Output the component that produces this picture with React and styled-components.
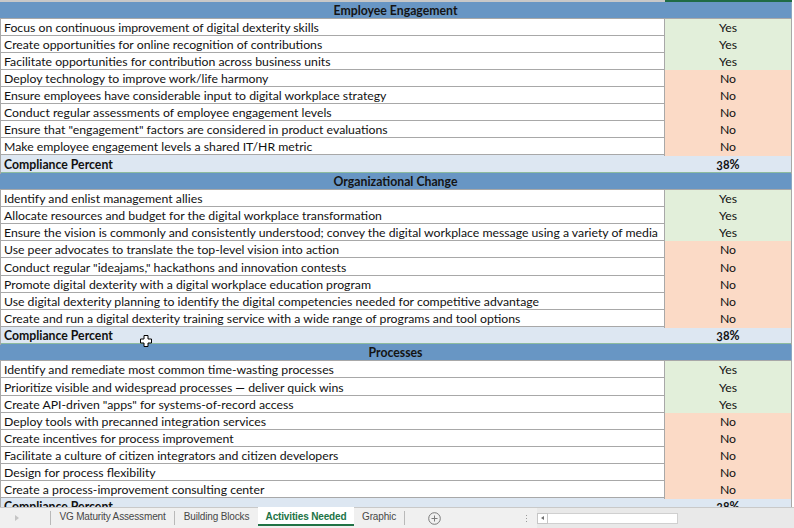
import React from "react";
import styled, { createGlobalStyle } from "styled-components";

const GlobalStyle = createGlobalStyle`
  html, body { margin: 0; padding: 0; background: #ffffff; overflow: hidden; }
  body { font-family: Lato, "Liberation Sans", sans-serif; }
`;

const sections = [
  {
    title: "Employee Engagement",
    pct: "38%",
    items: [
      ["Focus on continuous improvement of digital dexterity skills", "Yes"],
      ["Create opportunities for online recognition of contributions", "Yes"],
      ["Facilitate opportunities for contribution across business units", "Yes"],
      ["Deploy technology to improve work/life harmony", "No"],
      ["Ensure employees have considerable input to digital workplace strategy", "No"],
      ["Conduct regular assessments of employee engagement levels", "No"],
      ["Ensure that \"engagement\" factors are considered in product evaluations", "No"],
      ["Make employee engagement levels a shared IT/HR metric", "No"],
    ],
  },
  {
    title: "Organizational Change",
    pct: "38%",
    items: [
      ["Identify and enlist management allies", "Yes"],
      ["Allocate resources and budget for the digital workplace transformation", "Yes"],
      ["Ensure the vision is commonly and consistently understood; convey the digital workplace message using a variety of media", "Yes"],
      ["Use peer advocates to translate the top-level vision into action", "No"],
      ["Conduct regular \"ideajams,\" hackathons and innovation contests", "No"],
      ["Promote digital dexterity with a digital workplace education program", "No"],
      ["Use digital dexterity planning to identify the digital competencies needed for competitive advantage", "No"],
      ["Create and run a digital dexterity training service with a wide range of programs and tool options", "No"],
    ],
  },
  {
    title: "Processes",
    pct: "38%",
    items: [
      ["Identify and remediate most common time-wasting processes", "Yes"],
      ["Prioritize visible and widespread processes \u2014 deliver quick wins", "Yes"],
      ["Create API-driven \"apps\" for systems-of-record access", "Yes"],
      ["Deploy tools with precanned integration services", "No"],
      ["Create incentives for process improvement", "No"],
      ["Facilitate a culture of citizen integrators and citizen developers", "No"],
      ["Design for process flexibility", "No"],
      ["Create a process-improvement consulting center", "No"],
    ],
  },
];

/* Excel zoom gives rows of ~17.1px: a few rows are one pixel taller */
const TALL_ROWS = new Set([9, 15, 22]);

const tabs = [
  { name: "VG Maturity Assessment", w: 123 },
  { name: "Building Blocks", w: 83 },
  { name: "Activities Needed", w: 96, active: true },
  { name: "Graphic", w: 50 },
];

const Page = styled.div`
  width: 794px;
  height: 528px;
  display: flex;
  flex-direction: column;
  overflow: hidden;
  background: #ffffff;
`;

const Sheet = styled.div`
  position: relative;
  height: 507px;
  overflow: hidden;
  flex: none;
`;

const TopStrip = styled.div`
  display: grid;
  grid-template-columns: 665px 127px;
  height: 2px;
`;

const StripCell = styled.div`
  background: ${(p) => (p.$selected ? "#1f6b45" : "#c8c8c8")};
`;

const Row = styled.div`
  display: grid;
  grid-template-columns: 665px 127px;
  width: 792px;
  height: ${(p) => (p.$tall ? 18 : 17)}px;
  box-sizing: border-box;
  border-bottom: 1px solid ${(p) => (p.$line ? p.$line : "#a8a8a8")};
  background: ${(p) => p.$bg || "#ffffff"};
  font-size: 12.25px;
  line-height: ${(p) => (p.$tall ? 19 : 18)}px;
  color: #111111;
  font-variant-numeric: oldstyle-nums;
`;

const HeaderRow = styled.div`
  width: 792px;
  height: ${(p) => (p.$tall ? 18 : 17)}px;
  box-sizing: border-box;
  background: #6896c4;
  border-bottom: 1px solid #a8a8a8;
  border-right: 1px solid #8aa6c2;
  font-size: 12.25px;
  line-height: ${(p) => (p.$tall ? 19 : 18)}px;
  font-weight: 700;
  text-align: center;
  color: #141414;
`;

const LabelCell = styled.div`
  box-sizing: border-box;
  border-left: 1px solid #a8a8a8;
  border-right: 1px solid ${(p) => (p.$noDivider ? "transparent" : "#a8a8a8")};
  padding-left: 3px;
  white-space: nowrap;
  overflow-x: clip;
  font-weight: ${(p) => (p.$bold ? 700 : 400)};
`;

const valueBg = { Yes: "#e2efda", No: "#fbdac6" };

const ValueCell = styled.div`
  box-sizing: border-box;
  border-right: 1px solid #a8a8a8;
  text-align: center;
  background: ${(p) => valueBg[p.$v] || "transparent"};
  font-weight: ${(p) => (p.$bold ? 700 : 400)};
`;

const Cursor = styled.svg`
  position: absolute;
  left: 140px;
  top: 335px;
  pointer-events: none;
`;

const TabBar = styled.div`
  flex: 1;
  display: flex;
  align-items: stretch;
  background: #f0f0f0;
  border-top: 1px solid #c9c9c9;
  font-family: "Liberation Sans", Arial, sans-serif;
  font-size: 10px;
  color: #474747;
`;

const NavArea = styled.div`
  width: 50px;
  display: flex;
  align-items: center;
  padding-left: 15px;
  box-sizing: border-box;
`;

const NavArrow = styled.span`
  width: 0;
  height: 0;
  border-top: 3px solid transparent;
  border-bottom: 3px solid transparent;
  border-left: 4px solid #c4c4c4;
`;

const Sep = styled.div`
  width: 1px;
  align-self: center;
  height: 14px;
  background: #b9b9b9;
`;

const Tab = styled.div`
  width: ${(p) => p.$w}px;
  display: flex;
  align-items: center;
  justify-content: center;
  white-space: nowrap;
  box-sizing: border-box;
  margin-bottom: 2px;
  background: ${(p) => (p.$active ? "#ffffff" : "transparent")};
  color: ${(p) => (p.$active ? "#217346" : "#474747")};
  font-weight: ${(p) => (p.$active ? 700 : 400)};
  border-bottom: 2px solid ${(p) => (p.$active ? "#217346" : "transparent")};
  padding-top: 1px;
  margin-top: -1px;
  letter-spacing: -0.15px;
`;

const AddArea = styled.div`
  width: 58px;
  display: flex;
  align-items: center;
  justify-content: center;
`;

const Spacer = styled.div`
  width: 74px;
  display: flex;
  align-items: center;
  justify-content: flex-end;
  padding-right: 10px;
  box-sizing: border-box;
`;

const Dots = styled.div`
  display: flex;
  flex-direction: column;
  gap: 2px;
  span {
    width: 1px;
    height: 1px;
    background: #9a9a9a;
  }
`;

const Track = styled.div`
  flex: 1;
  display: flex;
  align-items: center;
  background: #e9e9e9;
`;

const ScrollButton = styled.div`
  width: 11px;
  height: 11px;
  box-sizing: border-box;
  border: 1px solid #c6c6c6;
  background: #ffffff;
  display: flex;
  align-items: center;
  justify-content: center;
`;

const LeftTri = styled.span`
  width: 0;
  height: 0;
  border-top: 2px solid transparent;
  border-bottom: 2px solid transparent;
  border-right: 3px solid #707070;
`;

const Thumb = styled.div`
  width: 130px;
  height: 11px;
  box-sizing: border-box;
  border: 1px solid #d0d0d0;
  border-left: none;
  background: #ffffff;
`;

function Section({ s, start }) {
  const last = start + s.items.length + 1;
  return (
    <>
      <HeaderRow $tall={TALL_ROWS.has(start)}>{s.title}</HeaderRow>
      {s.items.map(([label, v], i) => (
        <Row key={label} $tall={TALL_ROWS.has(start + 1 + i)}>
          <LabelCell>{label}</LabelCell>
          <ValueCell $v={v}>{v}</ValueCell>
        </Row>
      ))}
      <Row $bg="#dde7f2" $line="#8dbb9e" $tall={TALL_ROWS.has(last)}>
        <LabelCell $bold $noDivider>Compliance Percent</LabelCell>
        <ValueCell $bold>{s.pct}</ValueCell>
      </Row>
    </>
  );
}

export default function App() {
  return (
    <Page>
      <GlobalStyle />
      <Sheet>
        <TopStrip>
          <StripCell />
          <StripCell $selected />
        </TopStrip>
        {sections.map((s, k) => (
          <Section key={s.title} s={s} start={k * 10} />
        ))}
        <Cursor width="12" height="12" viewBox="0 0 12 12">
          <path
            d="M4 0.5 H8 V4 H11.5 V8 H8 V11.5 H4 V8 H0.5 V4 H4 Z"
            fill="#ffffff"
            stroke="#000000"
            strokeWidth="1"
          />
        </Cursor>
      </Sheet>
      <TabBar>
        <NavArea>
          <NavArrow />
        </NavArea>
        <Sep />
        {tabs.map((t, i) => (
          <React.Fragment key={t.name}>
            <Tab $w={t.w} $active={t.active}>
              {t.name}
            </Tab>
            {i === 0 && <Sep />}
          </React.Fragment>
        ))}
        <Sep />
        <AddArea>
          <svg width="13" height="13" viewBox="0 0 13 13">
            <circle cx="6.5" cy="6.5" r="5.8" fill="none" stroke="#7a7a7a" strokeWidth="1" />
            <path d="M6.5 3.5 V9.5 M3.5 6.5 H9.5" stroke="#7a7a7a" strokeWidth="1" />
          </svg>
        </AddArea>
        <Spacer>
          <Dots>
            <span />
            <span />
            <span />
          </Dots>
        </Spacer>
        <Track>
          <ScrollButton>
            <LeftTri />
          </ScrollButton>
          <Thumb />
        </Track>
      </TabBar>
    </Page>
  );
}
